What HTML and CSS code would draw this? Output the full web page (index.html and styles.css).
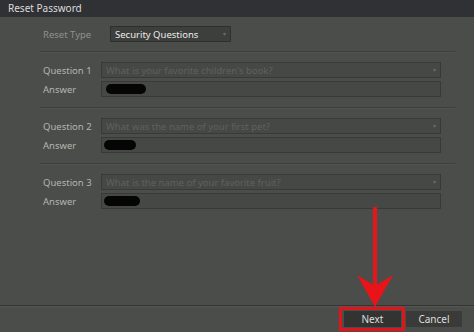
FILE: index.html
```html
<!DOCTYPE html>
<html lang="en">

<head>
    <meta charset="UTF-8">
    <title>Reset Password</title>
    <link rel="stylesheet" href="styles.css">
</head>

<body>
    <header class="title-bar">Reset Password</header>

    <main class="content">
        <div class="type-row">
            <span class="label label-dim">Reset Type</span>
            <div class="select type-select">
                <span>Security Questions</span>
                <span class="caret">&#9662;</span>
            </div>
        </div>

        <section class="group">
            <div class="row">
                <span class="label">Question 1</span>
                <div class="select field">
                    <span class="placeholder">What is your favorite children's book?</span>
                    <span class="caret">&#9662;</span>
                </div>
            </div>
            <div class="row">
                <span class="label">Answer</span>
                <div class="field"><span class="blob blob-1"></span></div>
            </div>
        </section>

        <section class="group">
            <div class="row">
                <span class="label">Question 2</span>
                <div class="select field">
                    <span class="placeholder">What was the name of your first pet?</span>
                    <span class="caret">&#9662;</span>
                </div>
            </div>
            <div class="row">
                <span class="label">Answer</span>
                <div class="field"><span class="blob blob-2"></span></div>
            </div>
        </section>

        <section class="group">
            <div class="row">
                <span class="label">Question 3</span>
                <div class="select field">
                    <span class="placeholder">What is the name of your favorite fruit?</span>
                    <span class="caret">&#9662;</span>
                </div>
            </div>
            <div class="row">
                <span class="label">Answer</span>
                <div class="field"><span class="blob blob-3"></span></div>
            </div>
        </section>
    </main>

    <footer class="actions">
        <button class="btn btn-next">Next</button>
        <button class="btn">Cancel</button>
    </footer>

    <!-- annotation drawn on top of the screenshot -->
    <svg class="overlay" width="474" height="332" viewBox="0 0 474 332">
        <rect x="340.5" y="308.5" width="63" height="21" fill="none" stroke="#e0141a" stroke-width="3"/>
        <rect x="373" y="207" width="4" height="80" fill="#e8141a"/>
        <polygon points="357,275 375,286 393,275 375,307" fill="#e8141a"/>
    </svg>
</body>

</html>
```

FILE: styles.css
```css
:root {
    --bg: #4b4d4a;
    --title-bg: #2f3135;
    --field-bg: #464845;
    --field-border: #393a38;
    --line: #3c3e3b;
    --label: #b3b5b2;
    --label-dim: #8f918e;
    --placeholder: #5f615e;
}

* {
    margin: 0;
    padding: 0;
    box-sizing: border-box;
}

body {
    width: 474px;
    height: 332px;
    overflow: hidden;
    position: relative;
    display: flex;
    flex-direction: column;
    background-color: var(--bg);
    font-family: 'Noto Sans', 'DejaVu Sans', sans-serif;
    font-size: 9.5px;
    color: var(--label);
}

.title-bar {
    height: 17px;
    line-height: 16px;
    padding-left: 8px;
    background-color: var(--title-bg);
    color: #dcdcdc;
    font-size: 10px;
}

.content {
    flex: 1;
    padding: 9px 19px 0 40px;
}

.type-row {
    display: flex;
    align-items: center;
    height: 16px;
    padding-left: 3px;
    margin-bottom: 9px;
}

.type-row .label {
    width: 67px;
}

.label {
    width: 58px;
    flex-shrink: 0;
}

.label-dim {
    color: var(--label-dim);
}

.select {
    display: flex;
    align-items: center;
    justify-content: space-between;
}

.type-select {
    width: 121px;
    height: 16px;
    padding: 0 4px;
    background-color: #3d3f3c;
    border: 1px solid #2f302e;
    color: #ececec;
}

.caret {
    font-size: 6px;
    color: #6a6c69;
}

.group {
    border-top: 1px solid var(--line);
    box-shadow: inset 0 1px 0 #515350;
    padding: 10px 0 10px 3px;
    display: flex;
    flex-direction: column;
    gap: 3px;
}

.row {
    display: flex;
    align-items: center;
}

.field {
    width: 340px;
    height: 16px;
    padding: 0 4px;
    background-color: var(--field-bg);
    border: 1px solid var(--field-border);
    display: flex;
    align-items: center;
}

.placeholder {
    color: var(--placeholder);
    white-space: nowrap;
}

.blob {
    display: block;
    height: 10px;
    border-radius: 6px;
    background-color: #050505;
}

.blob-1 { width: 40px; }
.blob-2 { width: 32px; margin-left: -2px; }
.blob-3 { width: 36px; margin-left: -2px; }

.actions {
    height: 27px;
    border-top: 1px solid #343533;
    box-shadow: inset 0 1px 0 #545653;
    display: flex;
    justify-content: flex-end;
    gap: 5px;
    padding: 5px 12px 0 0;
}

.btn {
    width: 56px;
    height: 16px;
    border: none;
    background-color: #3a3b39;
    color: #dedede;
    font-family: inherit;
    font-size: 10px;
}

.btn-next {
    width: 57px;
    background-color: #333432;
}

.overlay {
    position: absolute;
    top: 0;
    left: 0;
    pointer-events: none;
}
```
